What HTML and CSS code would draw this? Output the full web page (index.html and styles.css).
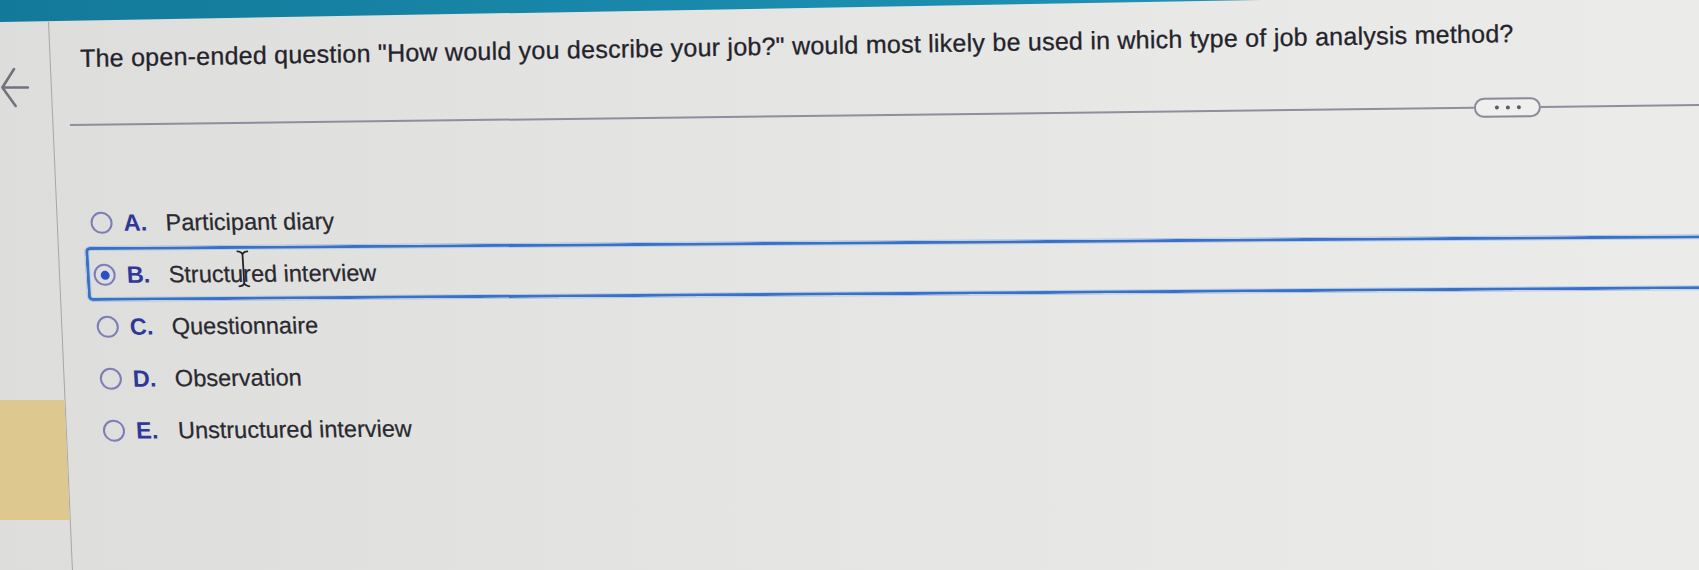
FILE: index.html
```html
<!DOCTYPE html>
<html lang="en">
<head>
<meta charset="utf-8">
<title>Question</title>
<link rel="stylesheet" href="styles.css">
</head>
<body>
<div class="screen">
  <div class="topbar"></div>
  <div class="layout">
    <aside class="sidebar">
      <svg class="back" width="32" height="44" viewBox="0 0 32 44" aria-hidden="true">
        <path d="M28 21.5 H2.5 M15 3 L2.5 21.5 L15 40" fill="none" stroke="#72727c" stroke-width="2.6" stroke-linecap="round" stroke-linejoin="round"/>
      </svg>
      <div class="note"></div>
    </aside>
    <main class="content">
      <p class="question">The open-ended question "How would you describe your job?" would most likely be used in which type of job analysis method?</p>
      <div class="divider">
        <span class="rule rule-left"></span>
        <span class="pill"><i></i><i></i><i></i></span>
        <span class="rule rule-right"></span>
      </div>
      <div class="options">
        <div class="option"><span class="radio"></span><span class="letter">A.</span><span class="label">Participant diary</span></div>
        <div class="option selected"><span class="radio"></span><span class="letter">B.</span><span class="label">Structured interview</span>
          <svg class="ibeam" width="14" height="38" viewBox="0 0 14 38" aria-hidden="true">
            <path d="M2 1.5 Q7 2 7 5.5 Q7 2 12 1.5 M7 5.5 V32.5 M2 36.5 Q7 36 7 32.5 Q7 36 12 36.5" fill="none" stroke="#232328" stroke-width="1.8" stroke-linecap="round"/>
          </svg>
        </div>
        <div class="option"><span class="radio"></span><span class="letter">C.</span><span class="label">Questionnaire</span></div>
        <div class="option"><span class="radio"></span><span class="letter">D.</span><span class="label">Observation</span></div>
        <div class="option"><span class="radio"></span><span class="letter">E.</span><span class="label">Unstructured interview</span></div>
      </div>
    </main>
  </div>
</div>
</body>
</html>
```

FILE: styles.css
```css
html, body {
  margin: 0;
  padding: 0;
  width: 1699px;
  height: 570px;
  overflow: hidden;
}

body {
  background: linear-gradient(90deg, #dddddb 0%, #e3e3e1 35%, #e8e8e6 70%, #ebebe9 100%);
  font-family: "Liberation Sans", Arial, sans-serif;
}

.screen {
  width: 1699px;
  height: 570px;
  overflow: hidden;
}

.topbar {
  height: 22px;
  width: 1800px;
  background: linear-gradient(90deg, #13799a 0%, #1a8cae 45%, #249bbf 100%);
  box-shadow: 0 -20px 0 0 #117291;
  transform: rotate(-1deg);
  transform-origin: 0 100%;
}

.layout {
  display: flex;
  height: 548px;
}

.sidebar {
  box-sizing: border-box;
  width: 49px;
  flex: none;
  border-right: 1.5px solid #a6a6a8;
  transform: skewX(2.5deg);
  transform-origin: 0 0;
  display: flex;
  flex-direction: column;
}

.back {
  display: block;
  margin-top: 44px;
  margin-left: -3px;
}

.note {
  margin-top: 290px;
  margin-left: -40px;
  width: 88px;
  height: 120px;
  background: #ddc88f;
}

.content {
  flex: 1;
  min-width: 0;
  padding-top: 22px;
}

.question {
  margin: 0 0 0 31px;
  font-size: 25px;
  line-height: 28px;
  letter-spacing: 0.25px;
  color: #24232b;
  -webkit-text-stroke: 0.3px #24232b;
  white-space: nowrap;
  transform: rotate(-1deg);
  transform-origin: 0 50%;
}

.divider {
  margin: 43px 0 0 21px;
  width: 1660px;
  height: 20px;
  display: flex;
  align-items: center;
  transform: rotate(-0.7deg);
  transform-origin: 0 50%;
}

.rule {
  height: 2px;
  background: #8e8e9d;
}

.rule-left {
  width: 1404px;
  flex: none;
}

.rule-right {
  flex: 1;
}

.pill {
  box-sizing: border-box;
  flex: none;
  width: 67px;
  height: 20px;
  border: 2.5px solid #8a8a9a;
  border-radius: 10px;
  background: #efefee;
  display: flex;
  align-items: center;
  justify-content: center;
  gap: 7px;
}

.pill i {
  width: 4px;
  height: 4px;
  border-radius: 50%;
  background: #5a5a6a;
}

.options {
  margin: 62px 0 0 33px;
  width: 1640px;
  display: flex;
  flex-direction: column;
  transform: rotate(-0.42deg) skewX(3deg);
  transform-origin: 0 0;
}

.option {
  position: relative;
  box-sizing: border-box;
  height: 52px;
  border: 3px solid transparent;
  border-right: none;
  border-radius: 5px 0 0 5px;
  padding-left: 4px;
  display: flex;
  align-items: center;
  font-size: 23.5px;
  color: #2a2930;
}

.option.selected {
  height: 54px;
  margin-top: -2px;
  padding-top: 2px;
  border-color: #3b71c5;
  box-shadow: 0 0 0 1px rgba(165, 192, 232, 0.85), inset 0 0 0 1px rgba(175, 202, 236, 0.85);
}

.radio {
  box-sizing: border-box;
  flex: none;
  width: 22px;
  height: 22px;
  border: 2.5px solid #7d7db8;
  border-radius: 50%;
  display: flex;
  align-items: center;
  justify-content: center;
}

.selected .radio::after {
  content: "";
  width: 9px;
  height: 9px;
  border-radius: 50%;
  background: #2b4fc6;
}

.letter {
  flex: none;
  width: 42px;
  margin-left: 11px;
  font-weight: bold;
  color: #2f3899;
}

.label {
  white-space: nowrap;
  -webkit-text-stroke: 0.25px #2a2930;
}

.ibeam {
  position: absolute;
  left: 147px;
  top: 1px;
}
```
